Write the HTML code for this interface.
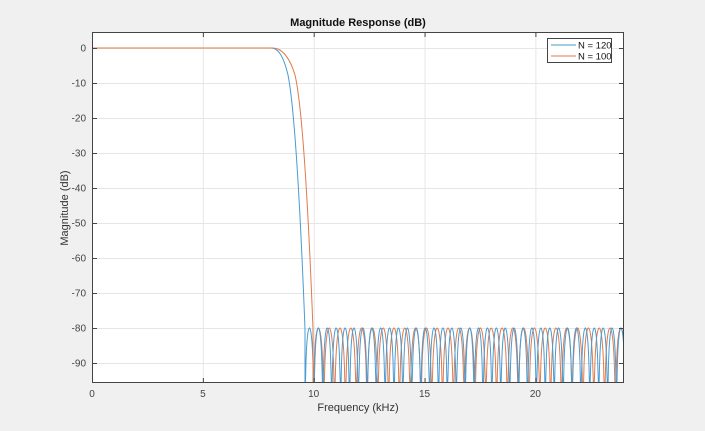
<!DOCTYPE html>
<html><head><style>
html,body{margin:0;padding:0;background:#f0f0f0;}
svg{display:block;font-family:"Liberation Sans",Arial,sans-serif;}
</style></head><body>
<svg id="s" width="705" height="431" viewBox="0 0 705 431" xmlns="http://www.w3.org/2000/svg">
<rect width="705" height="431" fill="#f0f0f0"/>
<rect x="92" y="32" width="532" height="351" fill="#fff"/>
<g id="grid" stroke="#e6e6e6" stroke-width="1"></g>
<defs><clipPath id="c"><rect x="92" y="32" width="532" height="351"/></clipPath></defs>
<g clip-path="url(#c)" fill="none" stroke-width="1">
<path id="ob" stroke="#e07a4c"/>
<path id="bb" stroke="#4a9bd2"/>
<path stroke="#4a9bd2" d="M92,48 L271,48 C279,48 284,58 288,75 C294,105 300,200 305,329 L305,383"/>
<path stroke="#e07a4c" d="M92,48 L273,48 C282,48 290,58 295,75 C302,105 308,200 313,329 L313,383"/>
</g>
<rect x="92.5" y="32.5" width="531" height="350" fill="none" stroke="#444" stroke-width="1"/>
<g id="ticks" stroke="#444" stroke-width="1"></g>
<g id="lab" font-size="10" fill="#444"></g>
<text x="358" y="26" font-size="11" font-weight="bold" text-anchor="middle" fill="#111">Magnitude Response (dB)</text>
<text x="358" y="411" font-size="11" text-anchor="middle" fill="#333">Frequency (kHz)</text>
<text transform="translate(68,208) rotate(-90)" font-size="11" text-anchor="middle" fill="#333">Magnitude (dB)</text>
<rect x="547.5" y="38.5" width="64" height="24" fill="#fff" stroke="#444"/>
<line x1="551" y1="45" x2="576" y2="45" stroke="#4a9bd2"/>
<line x1="551" y1="56" x2="576" y2="56" stroke="#e07a4c"/>
<text x="578" y="48.5" font-size="9.5" fill="#111">N = 120</text>
<text x="578" y="59.5" font-size="9.5" fill="#111">N = 100</text>
</svg>
<script>
var NS="http://www.w3.org/2000/svg";
function el(p,t,a,txt){var e=document.createElementNS(NS,t);for(var k in a)e.setAttribute(k,a[k]);if(txt)e.textContent=txt;document.getElementById(p).appendChild(e);}
function X(f){return 92+f*22.17;}
function Y(d){return 48-d*3.5;}
[5,10,15,20].forEach(function(f){el("grid","line",{x1:X(f)+.5,x2:X(f)+.5,y1:33,y2:382});});
for(var d=0;d>=-90;d-=10){el("grid","line",{x1:93,x2:623,y1:Y(d)+.5,y2:Y(d)+.5});}
[0,5,10,15,20].forEach(function(f){var x=X(f)+.5;el("ticks","line",{x1:x,x2:x,y1:383,y2:378});el("ticks","line",{x1:x,x2:x,y1:32,y2:37});el("lab","text",{x:X(f),y:397,"text-anchor":"middle"},""+f);});
for(var d=0;d>=-90;d-=10){var y=Y(d)+.5;el("ticks","line",{x1:92,x2:97,y1:y,y2:y});el("ticks","line",{x1:624,x2:619,y1:y,y2:y});el("lab","text",{x:86,y:Y(d)+3.5,"text-anchor":"end"},""+d);}
function lobes(id,x0,per){var s="";for(var x=x0;x<=626;x+=0.5){var t=(x-x0)/per;var v=Math.abs(Math.sin(Math.PI*t));var db=-80+20*Math.log10(Math.max(v,1e-5));if(db<-97)db=-97;s+=(s?"L":"M")+x.toFixed(1)+","+Y(db).toFixed(1);}document.getElementById(id).setAttribute("d",s);}
lobes("bb",305,8.9);
lobes("ob",313,10.8);
</script>
</body></html>
